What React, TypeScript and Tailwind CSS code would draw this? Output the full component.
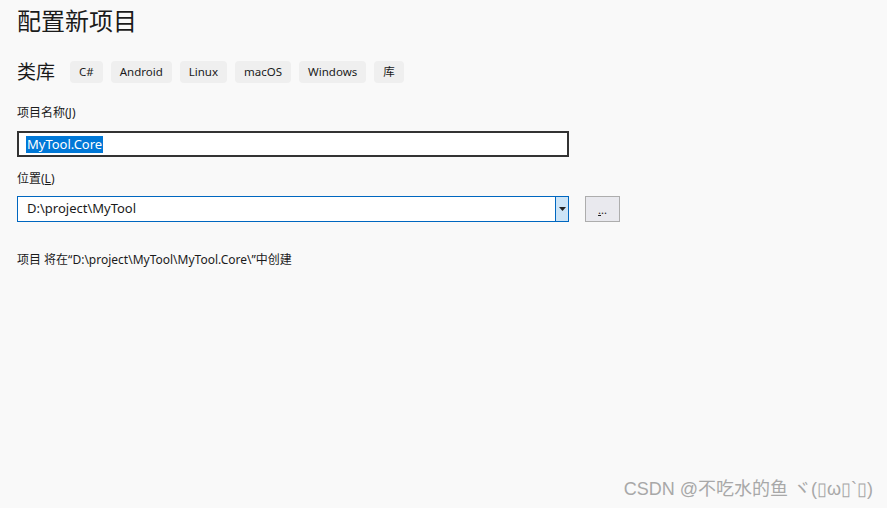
import React from 'react';

const FONT = '"Noto Sans", "Noto Sans CJK SC", sans-serif';

const tags = ['C#', 'Android', 'Linux', 'macOS', 'Windows', '库'];

export default function App() {
  return (
    <div
      className="relative w-[887px] h-[508px] overflow-hidden bg-[#f9f9f9] text-[#1b1b1b]"
      style={{ fontFamily: FONT }}
    >
      <div className="flex flex-col pl-[17px] pt-[5px]">
        <h1 className="text-[24px] leading-[32px] font-normal">配置新项目</h1>

        {/* template name + tags */}
        <div className="flex items-center mt-[24px] h-[22px]">
          <span className="text-[19px] leading-[22px] mr-[15px]">类库</span>
          <div className="flex gap-[8px]">
            {tags.map((t) => (
              <span
                key={t}
                className="h-[22px] px-[9px] flex items-center rounded-[4px] bg-[#efefef] text-[11.5px]"
              >
                {t}
              </span>
            ))}
          </div>
        </div>

        <label className="mt-[22px] text-[12px] leading-[16px]">
          项目名称(<span className="underline">J</span>)
        </label>
        <div className="mt-[10px] w-[552px] h-[26px] border-2 border-[#333] bg-white flex items-center px-[7px]">
          <span className="bg-[#0078d7] text-white text-[13px] leading-[17px] px-[1px]">MyTool.Core</span>
        </div>

        <label className="mt-[14px] text-[12px] leading-[16px]">
          位置(<span className="underline">L</span>)
        </label>
        <div className="mt-[9px] flex items-center">
          <div className="w-[552px] h-[26px] border border-[#0067c0] bg-white flex">
            <span className="flex-1 flex items-center pl-[9px] text-[13px]">D:\project\MyTool</span>
            <span className="w-[13px] border-l border-[#0067c0] bg-[#cce4f7] flex items-center justify-center">
              <svg width="7" height="4" viewBox="0 0 7 4">
                <path d="M0 0h7L3.5 4z" fill="#222" />
              </svg>
            </span>
          </div>
          <button className="ml-[16px] w-[35px] h-[26px] border border-[#adadad] bg-[#e9e9ee] flex items-end justify-center pb-[6px] text-[11px] leading-none">
            <span>
              <span className="underline">.</span>..
            </span>
          </button>
        </div>

        <p className="mt-[30px] text-[12px] leading-[16px]">
          项目 将在“D:\project\MyTool\MyTool.Core\”中创建
        </p>
      </div>

      <div
        className="absolute right-[14px] bottom-[8px] text-[18px] text-[#a8a8a8] leading-[22px]"
        style={{ fontFamily: '"Liberation Sans", "Noto Sans CJK SC", sans-serif' }}
      >
        CSDN @不吃水的鱼 ヾ(▯ω▯`▯)
      </div>
    </div>
  );
}
